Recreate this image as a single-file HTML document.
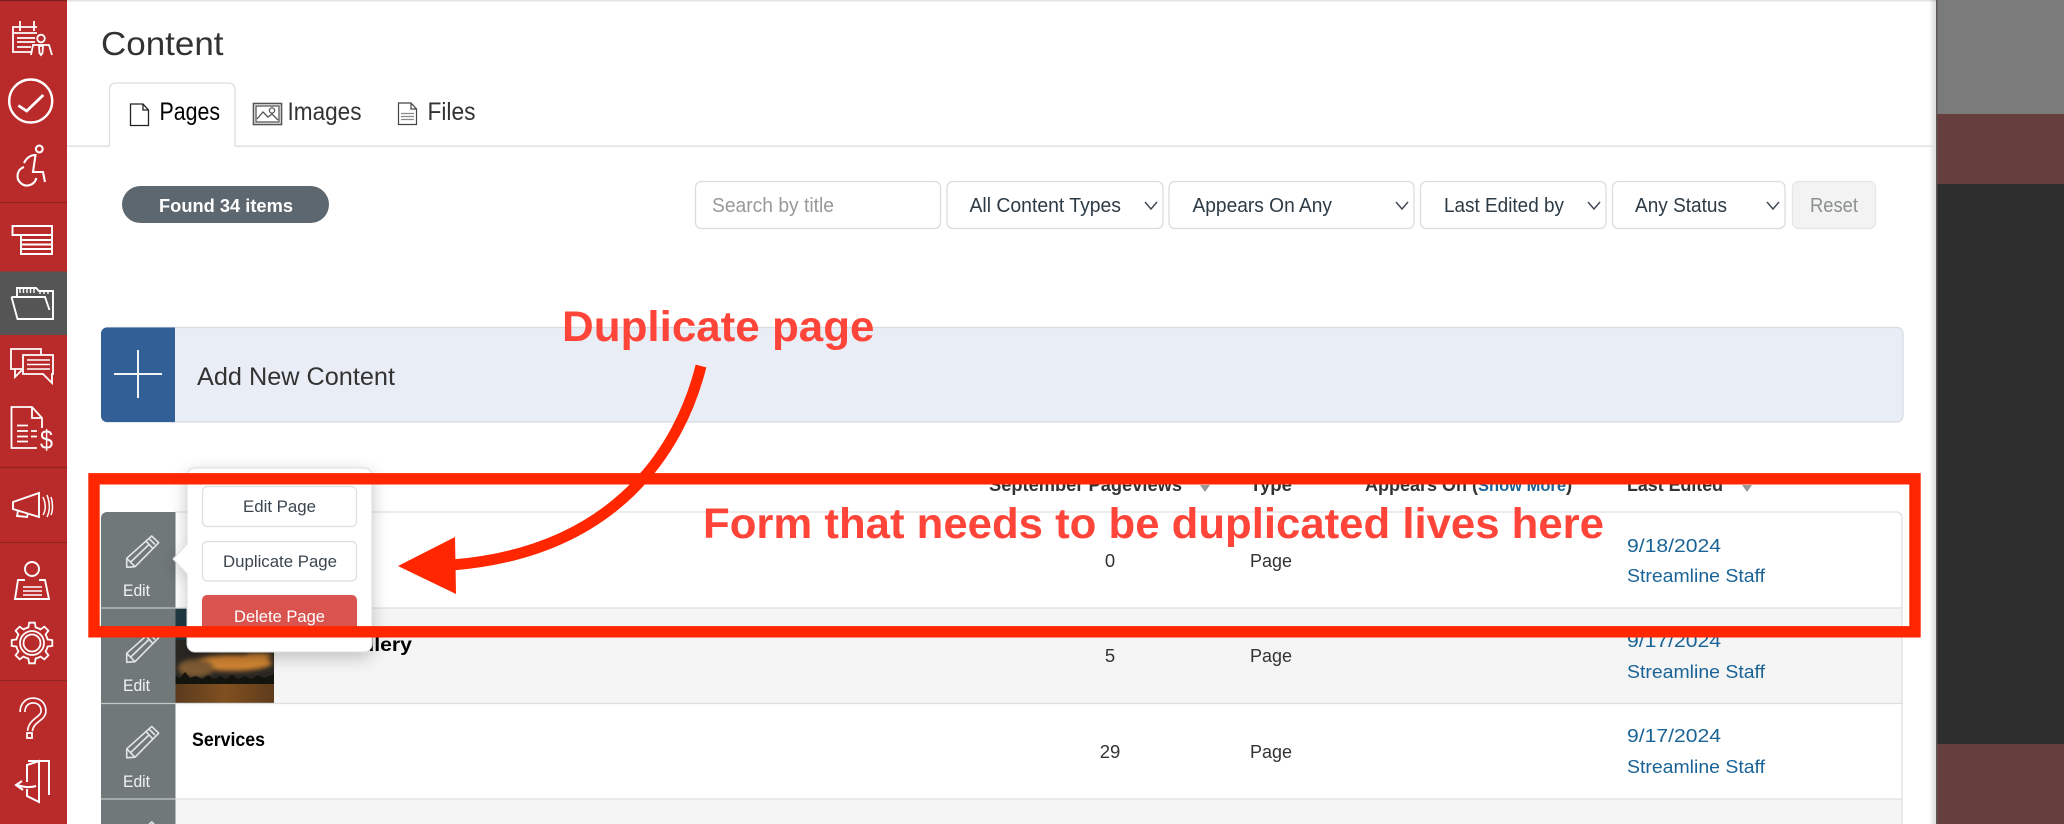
<!DOCTYPE html>
<html lang="en">
<head>
<meta charset="utf-8">
<title>Content</title>
<style>
html,body{margin:0;padding:0;width:2064px;height:824px;overflow:hidden;background:#fff}
svg{display:block;filter:blur(.35px)}
text{font-family:"Liberation Sans",sans-serif}
.ic{fill:none;stroke:#fff}
.ed{fill:none;stroke:#e2e5e5;stroke-width:1.6;stroke-linejoin:round}
.chev{fill:none;stroke:#3c4650;stroke-width:1.4}
.box{fill:#fff;stroke:#dcdcdc;stroke-width:1.3}
.sel{font-size:20.5px;fill:#2c3a45}
.h{font-size:18.5px;font-weight:bold;fill:#333}
.c{font-size:18.5px;fill:#333}
.l{font-size:18.5px;fill:#1a6396}
.e{font-size:16.5px;fill:#f2f3f3}
.t{font-size:19.5px;font-weight:bold;fill:#000}
.ann{font-size:43px;font-weight:bold;fill:#ff4539}
.pb{fill:#fff;stroke:#dedede;stroke-width:1.2}
.pt{font-size:16.5px;fill:#3a4550}
</style>
</head>
<body>
<svg xmlns="http://www.w3.org/2000/svg" width="2064" height="824" viewBox="0 0 2064 824">
<defs>
  <filter id="sh" x="-30%" y="-30%" width="160%" height="160%"><feDropShadow dx="0" dy="5" stdDeviation="8" flood-color="#000" flood-opacity=".22"/></filter>
  <filter id="b3"><feGaussianBlur stdDeviation="2.5"/></filter>
  <linearGradient id="edge" x1="0" x2="1"><stop offset="0" stop-color="#000" stop-opacity="0"/><stop offset="1" stop-color="#000" stop-opacity=".14"/></linearGradient>
  <linearGradient id="gnd" x1="0" x2="1"><stop offset="0" stop-color="#5a3a1e"/><stop offset=".5" stop-color="#80501f"/><stop offset="1" stop-color="#5f3c1d"/></linearGradient>
  <g id="pen" class="ed">
    <path d="M126.7 567.3V558.3L151.7 536L158.7 542.7L135 566.7Z"/>
    <path d="M126.7 558.3L135 566.7M145.7 540.7L153.3 549M130.7 562L149.5 544M149.5 539L155 544.500"/>
  </g>
  <path id="tooth" d="M-6.12 -14.78L-3.6 -15.59L-2.85 -20.3H2.85L3.6 -15.59L6.12 -14.78"/>
</defs>

<!-- backdrop right -->
<rect x="1936" y="0" width="128" height="114" fill="#7b7b7b"/>
<rect x="1936" y="114" width="128" height="70" fill="#663e3e"/>
<rect x="1936" y="184" width="128" height="560" fill="#2e2e2e"/>
<rect x="1936" y="744" width="128" height="80" fill="#663e3e"/>

<!-- main panel -->
<rect x="67" y="0" width="1870" height="824" fill="#fff"/>
<rect x="67" y="0" width="1870" height="1.6" fill="#e4e4e4"/>
<rect x="1929" y="0" width="7" height="824" fill="url(#edge)"/>
<rect x="1936" y="0" width="1.4" height="824" fill="#5d5553"/>

<!-- header -->
<text x="101" y="55" font-size="33" fill="#333" textLength="122.500" lengthAdjust="spacingAndGlyphs">Content</text>
<rect x="67" y="145.5" width="1869" height="1.4" fill="#dfdfdf"/>
<path d="M109.5 146V89a6 6 0 0 1 6-6H229a6 6 0 0 1 6 6V146" fill="#fff" stroke="#dedede" stroke-width="1.3"/>
<rect x="110" y="145" width="124.5" height="3" fill="#fff"/>
<path d="M130.5 125.5V104H143L148.5 110V125.5Z M143 104V110H148.5" fill="#fff" stroke="#222" stroke-width="1.3"/>
<text x="159.500" y="120" font-size="25" fill="#000" textLength="60.500" lengthAdjust="spacingAndGlyphs">Pages</text>
<g fill="none" stroke="#555" stroke-width="1.3">
  <rect x="253.5" y="103.5" width="28" height="21" stroke-width="1.6"/>
  <rect x="256" y="106" width="23" height="16"/>
  <path d="M257 119L263 112L268 117L272 114L278 120"/>
  <circle cx="272" cy="110.5" r="2.6"/>
</g>
<text x="287.500" y="120" font-size="25" fill="#333" textLength="74" lengthAdjust="spacingAndGlyphs">Images</text>
<g fill="none" stroke="#444" stroke-width="1.2">
  <path d="M398.5 124.5V103H411L416.5 109V124.5Z M411 103V109H416.5"/>
  <path d="M401 113.5H414M401 116.5H414M401 119.5H414" stroke="#888"/>
</g>
<text x="427.500" y="120" font-size="25" fill="#333" textLength="48" lengthAdjust="spacingAndGlyphs">Files</text>

<!-- found pill -->
<rect x="122" y="186" width="207" height="37" rx="18.5" fill="#5d6770"/>
<text x="159" y="212" font-size="18.5" font-weight="bold" fill="#fff" textLength="134" lengthAdjust="spacingAndGlyphs">Found 34 items</text>

<!-- filters -->
<rect class="box" x="695.5" y="181.5" width="245" height="47" rx="6"/>
<text x="712" y="212" font-size="20.5" fill="#999" textLength="122" lengthAdjust="spacingAndGlyphs">Search by title</text>
<rect class="box" x="947" y="181.5" width="216" height="47" rx="6"/>
<text class="sel" x="969.5" y="212" textLength="151.5" lengthAdjust="spacingAndGlyphs">All Content Types</text>
<path class="chev" d="M1145 202L1151 209L1157 202"/>
<rect class="box" x="1169" y="181.5" width="245" height="47" rx="6"/>
<text class="sel" x="1192.5" y="212" textLength="139.5" lengthAdjust="spacingAndGlyphs">Appears On Any</text>
<path class="chev" d="M1396 202L1402 209L1408 202"/>
<rect class="box" x="1420.5" y="181.5" width="185.5" height="47" rx="6"/>
<text class="sel" x="1444" y="212" textLength="120" lengthAdjust="spacingAndGlyphs">Last Edited by</text>
<path class="chev" d="M1588 202L1594 209L1600 202"/>
<rect class="box" x="1612.5" y="181.5" width="172.5" height="47" rx="6"/>
<text class="sel" x="1635" y="212" textLength="92" lengthAdjust="spacingAndGlyphs">Any Status</text>
<path class="chev" d="M1767 202L1773 209L1779 202"/>
<rect x="1792.5" y="181.5" width="83" height="47" rx="6" fill="#f3f3f3" stroke="#e6e6e6" stroke-width="1.2"/>
<text x="1810" y="212" font-size="20.5" fill="#8a8f90" textLength="48" lengthAdjust="spacingAndGlyphs">Reset</text>

<!-- add new content -->
<rect x="101.5" y="327.5" width="1801.5" height="94.5" rx="6" fill="#e9edf5" stroke="#d7dae0" stroke-width="1.2"/>
<path d="M175 327.5H107a6 6 0 0 0-6 6V416a6 6 0 0 0 6 6H175Z" fill="#315f96"/>
<path d="M114 374H162M138 350V398" stroke="#f2f5f8" stroke-width="2" fill="none"/>
<text x="197" y="385" font-size="25" fill="#333" textLength="198" lengthAdjust="spacingAndGlyphs">Add New Content</text>

<!-- table header -->
<text class="h" x="989" y="491" textLength="193" lengthAdjust="spacingAndGlyphs">September Pageviews</text>
<path d="M1200 485H1210L1205 492Z" fill="#999"/>
<text class="h" x="1250" y="491" textLength="42" lengthAdjust="spacingAndGlyphs">Type</text>
<text class="h" x="1365" y="491" textLength="113" lengthAdjust="spacingAndGlyphs">Appears On (</text>
<text x="1478" y="491" font-size="17" font-weight="bold" fill="#1a6396" textLength="88" lengthAdjust="spacingAndGlyphs">Show More</text>
<text class="h" x="1566" y="491">)</text>
<text class="h" x="1627" y="491" textLength="96" lengthAdjust="spacingAndGlyphs">Last Edited</text>
<path d="M1742 485H1752L1747 492Z" fill="#999"/>

<!-- rows -->
<path d="M175 512H1896a6 6 0 0 1 6 6V608H175Z" fill="#fff"/>
<rect x="175" y="608" width="1727" height="95" fill="#f5f5f5"/>
<rect x="175" y="703.5" width="1727" height="95.5" fill="#fff"/>
<rect x="175" y="799" width="1727" height="25" fill="#f5f5f5"/>
<path d="M175 512H1896a6 6 0 0 1 6 6V824" fill="none" stroke="#e0e0e0" stroke-width="1.3"/>
<path d="M175 608H1902M175 703.5H1902M175 799H1902" stroke="#dfdfdf" stroke-width="1.3" fill="none"/>

<!-- edit column -->
<path d="M175.5 512H107a6 6 0 0 0-6 6V824H175.5Z" fill="#70787a"/>
<path d="M101 608H175.5M101 703.5H175.5M101 799H175.5" stroke="#c3c8c8" stroke-width="1.3" fill="none"/>
<use href="#pen"/>
<use href="#pen" y="95"/>
<use href="#pen" y="190.5"/>
<use href="#pen" y="286"/>
<text class="e" x="123" y="596" textLength="27" lengthAdjust="spacingAndGlyphs">Edit</text>
<text class="e" x="123" y="691" textLength="27" lengthAdjust="spacingAndGlyphs">Edit</text>
<text class="e" x="123" y="787" textLength="27" lengthAdjust="spacingAndGlyphs">Edit</text>

<!-- thumbnail -->
<rect x="175.5" y="608.7" width="98.5" height="94" fill="#1f3a44"/>
<rect x="175.5" y="640" width="98.5" height="45" fill="#2a2723"/>
<g filter="url(#b3)">
  <ellipse cx="232" cy="663" rx="40" ry="8" fill="#d08430"/>
  <ellipse cx="196" cy="668" rx="18" ry="9" fill="#7d5a30"/>
  <ellipse cx="258" cy="656" rx="14" ry="3" fill="#c47d2f"/>
</g>
<path d="M175.5 684V676L180 678L185 672L190 678L196 676L202 679L208 675L214 679L220 676L226 679L232 675L238 679L245 676L251 679L258 675L264 678L274 674V684Z" fill="#14140f"/>
<rect x="175.5" y="684" width="98.5" height="18.7" fill="url(#gnd)"/>

<!-- row text -->
<text class="t" x="340" y="651" textLength="72" lengthAdjust="spacingAndGlyphs">Gallery</text>
<text class="t" x="192" y="746" textLength="73" lengthAdjust="spacingAndGlyphs">Services</text>

<text class="c" x="1110" y="567" text-anchor="middle">0</text>
<text class="c" x="1250" y="567" textLength="42" lengthAdjust="spacingAndGlyphs">Page</text>
<text class="l" x="1627" y="552" textLength="94" lengthAdjust="spacingAndGlyphs">9/18/2024</text>
<text class="l" x="1627" y="582" textLength="138" lengthAdjust="spacingAndGlyphs">Streamline Staff</text>

<text class="c" x="1110" y="662" text-anchor="middle">5</text>
<text class="c" x="1250" y="662" textLength="42" lengthAdjust="spacingAndGlyphs">Page</text>
<text class="l" x="1627" y="647" textLength="94" lengthAdjust="spacingAndGlyphs">9/17/2024</text>
<text class="l" x="1627" y="678" textLength="138" lengthAdjust="spacingAndGlyphs">Streamline Staff</text>

<text class="c" x="1110" y="758" text-anchor="middle">29</text>
<text class="c" x="1250" y="758" textLength="42" lengthAdjust="spacingAndGlyphs">Page</text>
<text class="l" x="1627" y="742" textLength="94" lengthAdjust="spacingAndGlyphs">9/17/2024</text>
<text class="l" x="1627" y="773" textLength="138" lengthAdjust="spacingAndGlyphs">Streamline Staff</text>
<text class="l" x="1627" y="838" textLength="94" lengthAdjust="spacingAndGlyphs">9/16/2024</text>

<!-- popover -->
<path d="M195 468H364a8 8 0 0 1 8 8V644a8 8 0 0 1-8 8H195a8 8 0 0 1-8-8V574L173 559L187 544V476a8 8 0 0 1 8-8Z" fill="#fff" stroke="#dcdcdc" stroke-width="1" filter="url(#sh)"/>
<rect class="pb" x="202.5" y="486.5" width="154" height="40" rx="5"/>
<text class="pt" x="243" y="512" textLength="73" lengthAdjust="spacingAndGlyphs">Edit Page</text>
<rect class="pb" x="202.5" y="541.5" width="154" height="39.5" rx="5"/>
<text class="pt" x="223" y="567" textLength="114" lengthAdjust="spacingAndGlyphs">Duplicate Page</text>
<rect x="202" y="595" width="155" height="40" rx="5" fill="#d9534f"/>
<text x="234" y="622" font-size="16.5" fill="#fff" textLength="91" lengthAdjust="spacingAndGlyphs">Delete Page</text>

<!-- annotation -->
<rect x="94" y="478.800" width="1821" height="153" fill="none" stroke="#ff2600" stroke-width="11.4"/>
<text class="ann" x="562" y="341" textLength="312.500" lengthAdjust="spacingAndGlyphs">Duplicate page</text>
<text class="ann" x="703" y="538" textLength="901" lengthAdjust="spacingAndGlyphs">Form that needs to be duplicated lives here</text>
<path d="M701 366C680 450 615 552 452 565" fill="none" stroke="#ff2600" stroke-width="11"/>
<path d="M398 566L455 537L456 594Z" fill="#ff2600"/>

<!-- sidebar -->
<rect x="0" y="0" width="67" height="824" fill="#b92b2a"/>
<rect x="0" y="0" width="67" height="1.2" fill="#7e2020"/>
<rect x="0" y="271.5" width="67" height="63.5" fill="#555"/>
<path d="M0 202.5H67M0 467.5H67M0 542.5H67M0 680.5H67" stroke="#8f2322" stroke-width="1.3" fill="none"/>

<!-- calendar person -->
<g class="ic" stroke-width="1.8">
  <path d="M37 27H13V52H31M20 21V31M34 21V31M13 33H37M17 38H35M17 42H35M17 47H31"/>
  <circle cx="41" cy="38.500" r="3.800"/>
  <path d="M31 55L33 45H49L52 55M39 46H43L42.500 53L41 55L39.500 53Z"/>
</g>
<!-- check -->
<circle class="ic" cx="30.700" cy="101" r="21.500" stroke-width="2.400"/>
<path class="ic" stroke-width="2.800" d="M18.300 105.500L26.700 111L43.300 95"/>
<!-- wheelchair -->
<g class="ic" stroke-width="2.100">
  <circle cx="39.300" cy="149" r="3.400"/>
  <path d="M24 163C27 157 31 155 35.500 155L33 172H43L45 182"/>
  <path d="M24 167A9.500 9.500 0 1 0 36.300 178"/>
</g>
<!-- list -->
<g class="ic" stroke-width="1.900">
  <path d="M12.500 226V235H21V254H52V226Z"/>
  <path d="M21 235H52M21 240H52M21 244.500H52M21 249H52"/>
</g>
<!-- folder -->
<g class="ic" stroke-width="1.900">
  <path d="M11.500 297L17.500 319H53V290"/>
  <path d="M11.500 297H45L49.500 310"/>
  <path d="M17 296V288H36L39 291H53"/>
  <path d="M20 288V293M23.500 288V293M27 288V293M30.500 288V293M34 288V293M40 291V294M44 291V294M48 291V294" stroke-width="1.400"/>
</g>
<!-- chat -->
<g class="ic" stroke-width="1.800">
  <path d="M22 369H11V349H41V355"/>
  <path d="M15 369V377L23 369"/>
  <path d="M23 355H53V374H52L52 383L43 374H23Z"/>
  <path d="M27 360H50M27 364.500H50M27 369H50" stroke-width="1.600"/>
</g>
<!-- doc dollar -->
<g class="ic" stroke-width="1.800">
  <path d="M42 428V418L32 407H11.500V448H37M32 407V418H42"/>
  <path d="M17 425.500H28M17 431H28M31 431H37M17 436.500H28M31 436.500H37M17 441.500H28"/>
</g>
<text x="40" y="449" font-size="27" fill="#fff" textLength="13" lengthAdjust="spacingAndGlyphs">$</text>
<!-- megaphone -->
<g class="ic" stroke-width="1.900">
  <path d="M13 502L39 493V517L13 509Z"/>
  <path d="M18 511L17 516L27 517L28 513"/>
  <path d="M43 497C46 504 46 510 43 515M47 495C50 503 50 511 47 517M51 497C53 503 53 510 51 515" stroke-width="1.500"/>
</g>
<!-- person desk -->
<g class="ic" stroke-width="1.900">
  <circle cx="32" cy="569" r="7"/>
  <path d="M25 580H18L15 599H49L45 580H39"/>
  <path d="M23 587H42M23 591H42M23 595H42" stroke-width="1.600"/>
</g>
<!-- gear -->
<g class="ic" transform="translate(32 643)" stroke-width="1.800">
  <use href="#tooth"/>
  <use href="#tooth" transform="rotate(45)"/>
  <use href="#tooth" transform="rotate(90)"/>
  <use href="#tooth" transform="rotate(135)"/>
  <use href="#tooth" transform="rotate(180)"/>
  <use href="#tooth" transform="rotate(225)"/>
  <use href="#tooth" transform="rotate(270)"/>
  <use href="#tooth" transform="rotate(315)"/>
  <circle r="12"/>
  <circle r="8.500"/>
</g>
<!-- question -->
<path d="M22.500 712C22.500 704 28 700.500 33 700.500C39.500 700.500 43.500 705 43.500 711C43.500 719 31 720 30 731" fill="none" stroke="#fff" stroke-width="6.500"/>
<path d="M22.500 712C22.500 704 28 700.500 33 700.500C39.500 700.500 43.500 705 43.500 711C43.500 719 31 720 30 731" fill="none" stroke="#b92b2a" stroke-width="3.200"/>
<rect class="ic" x="27" y="733" width="5" height="5" stroke-width="1.800"/>
<!-- door -->
<g class="ic" stroke-width="2">
  <path d="M28 761H49V795"/>
  <path d="M27 782V765L39 761V802L27 796V789"/>
  <path d="M36 786C30 788 23 787 17 785M22 781L16 785L23 790"/>
</g>
</svg>
</body>
</html>
